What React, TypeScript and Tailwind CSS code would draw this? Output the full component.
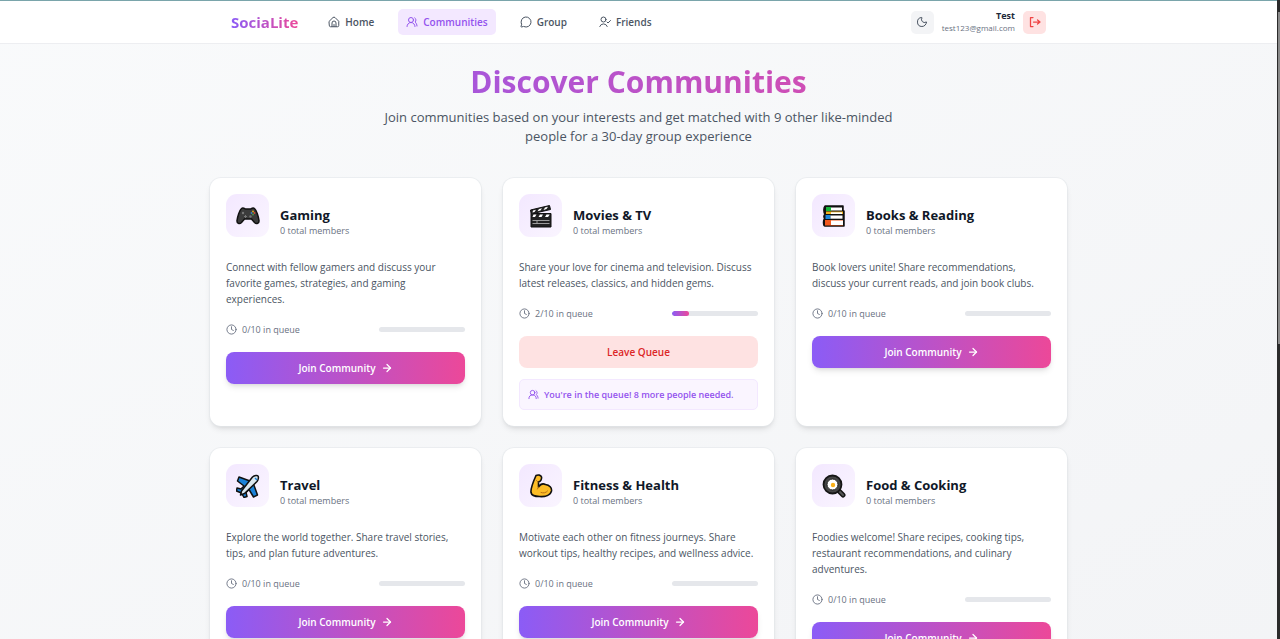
import { useState } from 'react';
import type { ReactNode } from 'react';
import { ArrowRight, Clock, MessageCircle, Moon, UsersRound } from 'lucide-react';

interface Community {
    id: string;
    name: string;
    icon: ReactNode;
    description: string;
    members: number;
    queue: number;
}

const HomeIcon = () => (
    <svg className="h-3 w-3" viewBox="0 0 24 24" fill="none" stroke="currentColor" strokeWidth="2" strokeLinecap="round" strokeLinejoin="round" aria-hidden="true">
        <path d="M2.500 10.500 10 3q2-1.500 4 0l7.500 7.500V19a2.500 2.500 0 0 1-2.500 2.500H5A2.500 2.500 0 0 1 2.500 19z" />
        <path d="M8 21v-7a4 4 0 0 1 8 0v7M12 17v4" />
    </svg>
);

const FriendsIcon = () => (
    <svg className="h-3 w-3" viewBox="0 0 24 24" fill="none" stroke="currentColor" strokeWidth="2" strokeLinecap="round" strokeLinejoin="round" aria-hidden="true">
        <circle cx="9" cy="7" r="5" />
        <path d="M1.500 21a8 8 0 0 1 15 0M16 12l2 2 5-5" />
    </svg>
);

const LogoutIcon = () => (
    <svg className="h-3 w-3" viewBox="0 0 24 24" fill="none" stroke="currentColor" strokeWidth="2.500" strokeLinecap="round" strokeLinejoin="round" aria-hidden="true">
        <path d="M8 3H3v18h5M9 12h13M17 8l5 4-5 4" />
    </svg>
);

const GamepadIcon = () => (
    <svg className="h-6 w-6" viewBox="0 0 24 24" aria-hidden="true">
        <path d="M5.500 4.500c1.500-1 3 0 4 .5h5c1-.5 2.500-1.500 4-.5 2 1.500 4 8.500 4.500 12 .3 3-2.500 4-4.500 2l-3-3.500h-7l-3 3.500c-2 2-4.800 1-4.500-2 .5-3.500 2.500-10.500 4.500-12z" fill="#3b3b3b" stroke="#111" strokeWidth="1.500" />
        <circle cx="7" cy="9" r="1.200" fill="#777" />
        <path d="M9.500 11v3M8 12.500h3" stroke="#777" />
        <circle cx="14.500" cy="12.500" r="1.200" fill="#777" />
        <circle cx="17" cy="7.500" r=".9" fill="#e5b518" />
        <circle cx="15.500" cy="9" r=".9" fill="#3b82c4" />
        <circle cx="18.500" cy="9" r=".9" fill="#d44a35" />
        <circle cx="17" cy="10.500" r=".9" fill="#4f9b48" />
    </svg>
);

const ClapperIcon = () => (
    <svg className="h-6 w-6" viewBox="0 0 24 24" aria-hidden="true">
        <path d="M1.500 6 20.500 1.500l1 4L4 9.500h18V23H2V9z" fill="#222" stroke="#111" strokeLinejoin="round" />
        <path d="m4 6.500 3-.8-1.500 2.300-2 .5zM10 5l3-.8-1.500 2.300-3 .8zM16 3.500l3-.7-1.500 2.300-3 .8zM4.500 10.500h3L6 13H3.500zM11 10.500h3L12.500 13h-3zM17.500 10.500h3V11L19 13h-3z" fill="#fff" />
        <path d="M3.500 16.500h17M3.500 19.500h17M8 16.500v3" stroke="#aaa" strokeWidth=".9" />
    </svg>
);

const BooksIcon = () => (
    <svg className="h-6 w-6" viewBox="0 0 24 24" aria-hidden="true">
        <path d="M3 2h18v5h1v15H3c-2 0-2-7 0-7-1.500-1-1.500-4 0-4.500C1.500 9 1.500 3 3 2z" fill="#111" stroke="#111" strokeWidth="1.500" strokeLinejoin="round" />
        <path d="M4 3h5v4H4z" fill="#18b63b" />
        <path d="M9 3.500h11v3H9z" fill="#fff" />
        <path d="M4 7.500h17V10H4z" fill="#f3b51f" />
        <path d="M9 8.300h11V10H9z" fill="#fff" />
        <path d="M3.500 11h5v4h-5z" fill="#1c87dc" />
        <path d="M8.500 11.500h12v3.200h-12z" fill="#fff" />
        <path d="M3 16h18v5.500H3z" fill="#f2591f" />
        <path d="M9 16.500h12v4.500H9z" fill="#fff" />
    </svg>
);

const PlaneIcon = () => (
    <svg className="h-6 w-6" viewBox="0 0 24 24" aria-hidden="true">
        <g stroke="#111" strokeWidth="1.500" strokeLinejoin="round">
            <path d="M14 7 3 3 1.500 7 8 12l-3 3-4-1-.5 3 5 2L8 23.500l3-1-1-4 3-3 4.500 7.500 4-2L17.500 10z" fill="#1b82d8" />
            <path d="M16.500 3c2-1.700 5-1.700 5.500-1 .6.600.7 3.500-1 5.500L8.500 19.500 4.500 21l1-4z" fill="#dbe7ef" />
        </g>
        <path d="m19 4 2 2" stroke="#1b82d8" strokeWidth="1.500" />
    </svg>
);

const BicepsIcon = () => (
    <svg className="h-6 w-6" viewBox="0 0 24 24" aria-hidden="true">
        <path d="M7 1.500c2-1 5-.5 5.500 1.500.4 2-.8 4.500-3 5L9.500 13c2-3 5-3.500 7-2.500 4 .5 6.500 3.500 6 6.500-1 4-6 6-12 5.500-4.500 0-8-1-8.500-4C1.500 15 5 6 7 1.500z" fill="#fcbd27" stroke="#111" strokeWidth="1.600" strokeLinejoin="round" />
        <path d="M9 8 7.500 6.500M9.500 13l-1 2M12 18.500c2.500 1 5 .3 6.500-1.500" fill="none" stroke="#b96f11" strokeLinecap="round" />
    </svg>
);

const PanIcon = () => (
    <svg className="h-6 w-6" viewBox="0 0 24 24" aria-hidden="true">
        <path d="m15 15 6 6" stroke="#161616" strokeWidth="5" strokeLinecap="round" />
        <path d="m16 16 5 5" stroke="#555" strokeWidth="2" strokeLinecap="round" />
        <circle cx="10.500" cy="10.500" r="9" fill="#454545" stroke="#161616" strokeWidth="1.800" />
        <circle cx="10.500" cy="10.500" r="5.500" fill="#fff" stroke="#222" />
        <circle cx="11" cy="11" r="2.200" fill="#fbb11b" />
    </svg>
);

const communities: Community[] = [
    {
        id: 'gaming',
        name: 'Gaming',
        icon: <GamepadIcon />,
        description: 'Connect with fellow gamers and discuss your favorite games, strategies, and gaming experiences.',
        members: 0,
        queue: 0,
    },
    {
        id: 'movies',
        name: 'Movies & TV',
        icon: <ClapperIcon />,
        description: 'Share your love for cinema and television. Discuss latest releases, classics, and hidden gems.',
        members: 0,
        queue: 2,
    },
    {
        id: 'books',
        name: 'Books & Reading',
        icon: <BooksIcon />,
        description: 'Book lovers unite! Share recommendations, discuss your current reads, and join book clubs.',
        members: 0,
        queue: 0,
    },
    {
        id: 'travel',
        name: 'Travel',
        icon: <PlaneIcon />,
        description: 'Explore the world together. Share travel stories, tips, and plan future adventures.',
        members: 0,
        queue: 0,
    },
    {
        id: 'fitness',
        name: 'Fitness & Health',
        icon: <BicepsIcon />,
        description: 'Motivate each other on fitness journeys. Share workout tips, healthy recipes, and wellness advice.',
        members: 0,
        queue: 0,
    },
    {
        id: 'food',
        name: 'Food & Cooking',
        icon: <PanIcon />,
        description: 'Foodies welcome! Share recipes, cooking tips, restaurant recommendations, and culinary adventures.',
        members: 0,
        queue: 0,
    },
];

const navItems = [
    { label: 'Home', icon: <HomeIcon /> },
    { label: 'Communities', icon: <UsersRound className="h-3 w-3" /> },
    { label: 'Group', icon: <MessageCircle className="h-3 w-3" /> },
    { label: 'Friends', icon: <FriendsIcon /> },
];

const QUEUE_SIZE = 10;

function Navbar() {
    return (
        <header className="border-t border-t-[#7aa5ab] border-b border-b-gray-200/70 bg-white">
            <div className="mx-auto flex h-[42px] max-w-[857px] items-center justify-between px-[21px]">
                <div className="flex items-center gap-[22px]">
                    <a href="#home" className="bg-linear-to-r/srgb from-[#8b5cf6] to-[#ec4899] bg-clip-text text-[15px] font-bold text-transparent">
                        SociaLite
                    </a>
                    <nav className="flex items-center gap-4" aria-label="Main">
                        {navItems.map((item) => (
                            <a
                                key={item.label}
                                href={`#${item.label.toLowerCase()}`}
                                className={`flex h-[26px] items-center gap-[5px] rounded-[5px] px-2 text-[10px] font-semibold ${item.label === 'Communities'
                                    ? 'bg-[#f3e8ff] text-[#9353ee]'
                                    : 'text-[#4b5563]'
                                    }`}
                            >
                                {item.icon}
                                {item.label}
                            </a>
                        ))}
                    </nav>
                </div>

                <div className="flex items-center gap-2">
                    <button type="button" aria-label="Toggle theme" className="flex h-[23px] w-[23px] items-center justify-center rounded-[5px] bg-gray-100 text-[#4b5563]">
                        <Moon className="h-3 w-3" />
                    </button>
                    <div className="text-right">
                        <p className="text-[9px] leading-3 font-bold text-gray-800">Test</p>
                        <p className="text-[8px] leading-3 text-gray-500">test123@gmail.com</p>
                    </div>
                    <button type="button" aria-label="Log out" className="flex h-[23px] w-[23px] items-center justify-center rounded-[5px] bg-[#fee2e2] text-[#ef4444]">
                        <LogoutIcon />
                    </button>
                </div>
            </div>
        </header>
    );
}

function CommunityCard({ community, joined, onToggle }: { community: Community; joined: boolean; onToggle: () => void }) {
    return (
        <article className="rounded-[11px] bg-white p-4 shadow-md ring-1 ring-gray-200/60">
            <div className="mb-[22px] flex items-end gap-[11px]">
                <div className="flex h-[43px] w-[43px] items-center justify-center rounded-[11px] bg-linear-to-br from-[#f3e8ff] to-[#faf5ff]">
                    {community.icon}
                </div>
                <div>
                    <h2 className="text-[13px] leading-[18px] font-bold text-gray-900">{community.name}</h2>
                    <p className="text-[9px] leading-[13px] text-gray-500">{community.members} total members</p>
                </div>
            </div>

            <p className="mb-4 text-[10px] leading-4 text-[#4b5563]">{community.description}</p>

            <div className="mb-4 flex h-[13px] items-center justify-between">
                <div className="flex items-center gap-[5px] text-[9px] text-gray-500">
                    <Clock className="h-[11px] w-[11px]" />
                    <span>{community.queue}/{QUEUE_SIZE} in queue</span>
                </div>
                <div className="h-[5px] w-[86px] overflow-hidden rounded-full bg-gray-200">
                    <div
                        className="h-full rounded-full bg-linear-to-r/srgb from-[#8b5cf6] to-[#ec4899]"
                        style={{ width: `${(community.queue / QUEUE_SIZE) * 100}%` }}
                    />
                </div>
            </div>

            {joined ? (
                <>
                    <button type="button" onClick={onToggle} className="h-8 w-full rounded-lg bg-[#fee2e2] text-[10px] font-semibold text-[#dc2626]">
                        Leave Queue
                    </button>
                    <div className="mt-[11px] flex h-[31px] items-center gap-[5px] rounded-[5px] border border-purple-100 bg-[#faf5ff] px-2 text-[9px] font-semibold text-[#9353ee]">
                        <UsersRound className="h-[11px] w-[11px]" />
                        You're in the queue! {QUEUE_SIZE - community.queue} more people needed.
                    </div>
                </>
            ) : (
                <button type="button" onClick={onToggle} className="flex h-8 w-full items-center justify-center gap-[5px] rounded-lg bg-linear-to-r/srgb from-[#8b5cf6] to-[#ec4899] text-[10px] font-semibold text-white shadow-md">
                    Join Community
                    <ArrowRight className="h-3 w-3" strokeWidth={2.5} />
                </button>
            )}
        </article>
    );
}

export default function App() {
    const [joinedId, setJoinedId] = useState<string | null>('movies');

    return (
        <div className="flex h-screen overflow-hidden font-['Open_Sans','Noto_Sans',sans-serif]">
            <div className="min-w-0 flex-1 overflow-y-auto bg-linear-to-br from-gray-50 to-gray-100 [scrollbar-width:none]">
                <Navbar />
                <main className="mx-auto max-w-[857px] py-5">
                    <div className="mb-8 text-center">
                        <h1 className="mb-2 bg-linear-to-r/srgb from-[#8b5cf6] to-[#ec4899] bg-clip-text text-3xl leading-9 font-bold text-transparent">
                            Discover Communities
                        </h1>
                        <p className="mx-auto max-w-lg text-[13px] leading-[19px] text-[#4b5563]">
                            Join communities based on your interests and get matched with 9 other like-minded people for a 30-day group experience
                        </p>
                    </div>

                    <div className="grid grid-cols-1 gap-[22px] sm:grid-cols-2 md:grid-cols-3">
                        {communities.map((community) => (
                            <CommunityCard
                                key={community.id}
                                community={community}
                                joined={joinedId === community.id}
                                onToggle={() => setJoinedId(joinedId === community.id ? null : community.id)}
                            />
                        ))}
                    </div>
                </main>
            </div>
            <div className="w-[3px] bg-[#2b2b2b] pt-3" aria-hidden="true">
                <div className="ml-px h-[53%] bg-[#8a8a8a]" />
            </div>
        </div>
    );
}
